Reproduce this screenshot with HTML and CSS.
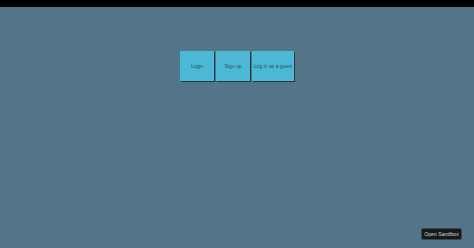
FILE: index.html
```html
<!DOCTYPE html>
<html>
<head>
<meta charset="utf-8">
<link rel="stylesheet" href="styles.css">
</head>
<body>
<div class="topbar"></div>
<main class="stage">
  <div class="auth-buttons">
    <button class="auth-btn login">Login</button>
    <button class="auth-btn signup">Sign up</button>
    <button class="auth-btn guest">Log in as a guest</button>
  </div>
</main>
<button class="sandbox-btn">Open Sandbox</button>
</body>
</html>
```
FILE: styles.css
```css
html, body {
  margin: 0;
  padding: 0;
  height: 100%;
}
body {
  background: #547588;
  font-family: "Liberation Sans", Arial, sans-serif;
  overflow: hidden;
}
.topbar {
  height: 7px;
  background: #000;
}
.stage {
  display: flex;
  justify-content: center;
  padding-top: 44px;
}
.auth-buttons {
  display: flex;
  gap: 2px;
}
.auth-btn {
  height: 30px;
  width: 34px;
  padding: 0;
  margin: 0;
  border: none;
  background: #4bb9d5;
  color: #2f4f5c;
  font-family: "Liberation Sans", Arial, sans-serif;
  font-size: 5px;
  box-shadow: 1px 1px 0 #243845;
  white-space: nowrap;
}
.auth-btn.guest {
  width: 42px;
}
.sandbox-btn {
  position: fixed;
  right: 12px;
  bottom: 8px;
  box-sizing: border-box;
  width: 41px;
  height: 12px;
  padding: 0;
  border: 1px solid #3c4650;
  border-radius: 2px;
  background: #161819;
  color: #d8d8d8;
  font-family: "Liberation Sans", Arial, sans-serif;
  font-size: 5.2px;
}
```
